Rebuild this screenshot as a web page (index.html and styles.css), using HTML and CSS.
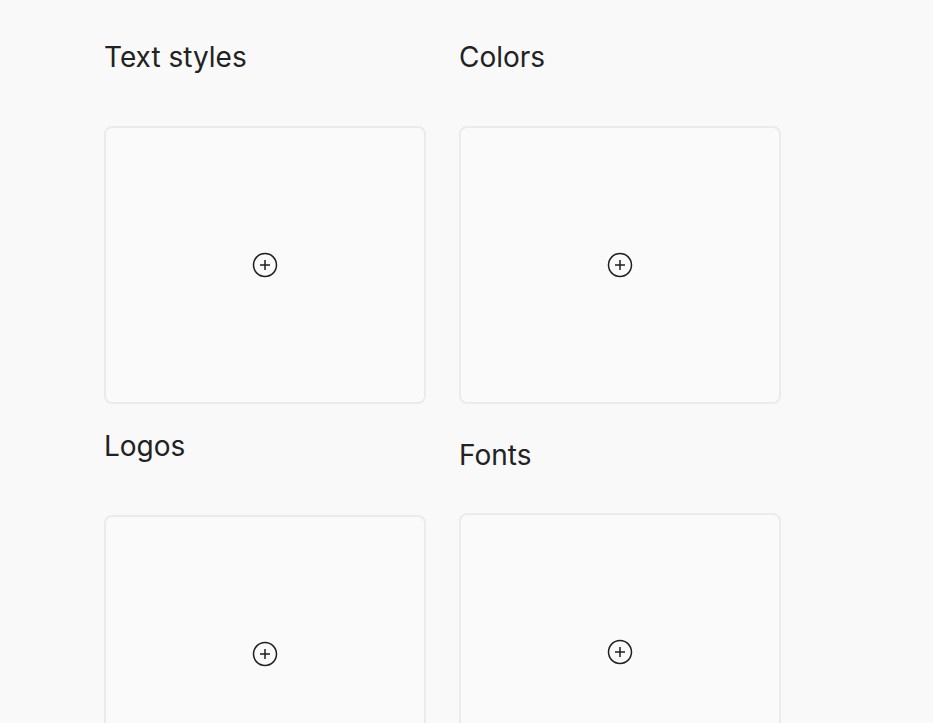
FILE: index.html
```html
<!DOCTYPE html>
<html lang="en">
<head>
    <meta charset="UTF-8">
    <meta name="viewport" content="width=device-width, initial-scale=1.0">
    <title>Brand kit</title>
    <link rel="stylesheet" href="styles.css">
</head>
<body>
    <div class="kit">
        <div class="section">
            <h2>Text styles</h2>
            <button class="slot" aria-label="Add text style">
                <svg width="26" height="26" viewBox="0 0 26 26"><circle cx="13" cy="13" r="11.5"/><path d="M13 8v10M8 13h10"/></svg>
            </button>
        </div>
        <div class="section">
            <h2>Colors</h2>
            <button class="slot" aria-label="Add color">
                <svg width="26" height="26" viewBox="0 0 26 26"><circle cx="13" cy="13" r="11.5"/><path d="M13 8v10M8 13h10"/></svg>
            </button>
        </div>
        <div class="section">
            <h2>Logos</h2>
            <button class="slot" aria-label="Add logo">
                <svg width="26" height="26" viewBox="0 0 26 26"><circle cx="13" cy="13" r="11.5"/><path d="M13 8v10M8 13h10"/></svg>
            </button>
        </div>
        <div class="section fonts">
            <h2>Fonts</h2>
            <button class="slot" aria-label="Add font">
                <svg width="26" height="26" viewBox="0 0 26 26"><circle cx="13" cy="13" r="11.5"/><path d="M13 8v10M8 13h10"/></svg>
            </button>
        </div>
    </div>
</body>
</html>
```
FILE: styles.css
```css
body {
    font-family: Inter, "Liberation Sans", sans-serif;
    margin: 0;
    padding: 0;
    background-color: #f9f9f9;
    color: #222;
}
.kit {
    display: grid;
    grid-template-columns: 322px 322px;
    column-gap: 33px;
    row-gap: 25px;
    padding: 40px 0 0 104px;
}
.section h2 {
    margin: 0 0 52px;
    font-size: 28px;
    line-height: 34px;
    font-weight: 400;
}
.fonts h2 {
    margin-top: 9px;
    margin-bottom: 41px;
}
.slot {
    display: flex;
    align-items: center;
    justify-content: center;
    width: 322px;
    height: 278px;
    padding: 0;
    background: #fafafa;
    border: 2px solid #ebebeb;
    border-radius: 8px;
    cursor: pointer;
}
.slot svg {
    fill: none;
    stroke: #1f1f1f;
    stroke-width: 1.5;
}
```
